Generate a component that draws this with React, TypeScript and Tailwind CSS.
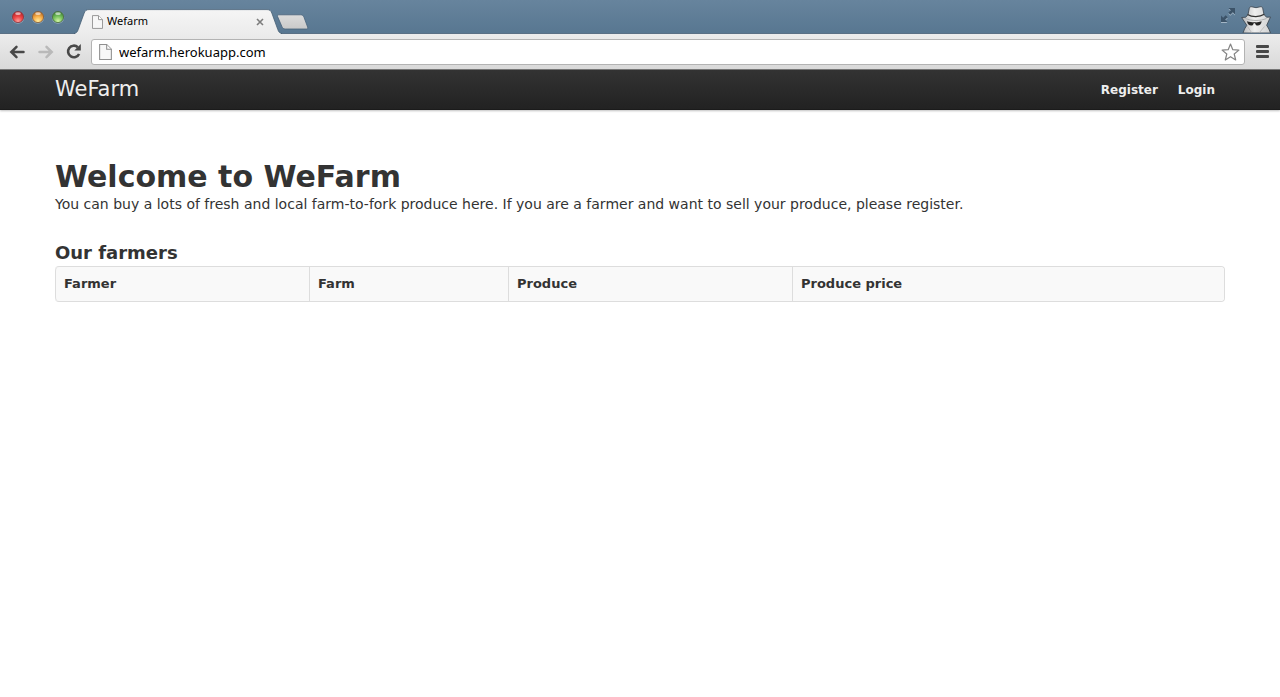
type IconProps = {
  className?: string;
};

type Column = {
  label: string;
  width: string;
};

const columns: Column[] = [
  { label: 'Farmer', width: 'w-[254px]' },
  { label: 'Farm', width: 'w-[199px]' },
  { label: 'Produce', width: 'w-[284px]' },
  { label: 'Produce price', width: 'w-auto' },
];

const PageIcon = ({ className }: IconProps) => (
  <svg viewBox="0 0 12 15" className={className} aria-hidden="true">
    <path d="M.5.5h6.6l4.4 4.4v9.6H.5z" fill="#f7f7f7" stroke="#8f8f8f" />
    <path d="M7.1.8v4.1h4.2" fill="#fff" stroke="#8f8f8f" />
  </svg>
);

const TrafficLights = () => (
  <svg
    width="54"
    height="16"
    viewBox="0 0 54 16"
    role="img"
    aria-label="Window controls"
  >
    <defs>
      <radialGradient id="red" cx=".5" cy=".85" r=".8">
        <stop offset="0" stopColor="#ff9c98" />
        <stop offset=".5" stopColor="#ee4545" />
        <stop offset="1" stopColor="#b52328" />
      </radialGradient>
      <radialGradient id="amber" cx=".5" cy=".85" r=".8">
        <stop offset="0" stopColor="#ffec9c" />
        <stop offset=".5" stopColor="#f9b14b" />
        <stop offset="1" stopColor="#b86a20" />
      </radialGradient>
      <radialGradient id="green" cx=".5" cy=".85" r=".8">
        <stop offset="0" stopColor="#d3f5a6" />
        <stop offset=".5" stopColor="#7cc560" />
        <stop offset="1" stopColor="#3c8434" />
      </radialGradient>
    </defs>
    <g fill="#a9bccb" opacity=".7">
      <circle cx="7" cy="8.6" r="6.2" />
      <circle cx="27" cy="8.6" r="6.2" />
      <circle cx="47" cy="8.6" r="6.2" />
    </g>
    <g strokeWidth=".8">
      <circle cx="7" cy="8" r="5.6" fill="url(#red)" stroke="#83343e" />
      <circle cx="27" cy="8" r="5.6" fill="url(#amber)" stroke="#7d5b3a" />
      <circle cx="47" cy="8" r="5.6" fill="url(#green)" stroke="#46693f" />
    </g>
    <g fill="#fff" opacity=".6">
      <ellipse cx="7" cy="4.7" rx="2.8" ry="1.4" />
      <ellipse cx="27" cy="4.7" rx="2.8" ry="1.4" />
      <ellipse cx="47" cy="4.7" rx="2.8" ry="1.4" />
    </g>
  </svg>
);

const IncognitoIcon = () => (
  <svg
    width="32"
    height="28"
    viewBox="0 0 32 28"
    role="img"
    aria-label="Incognito"
  >
    <defs>
      <linearGradient id="coat" x1="0" x2="1" y1="0" y2="0">
        <stop offset="0" stopColor="#b4b6b8" />
        <stop offset=".45" stopColor="#eeeeee" />
        <stop offset="1" stopColor="#cfd0d1" />
      </linearGradient>
    </defs>
    <path
      d="M8 9.500 9.300 3.200C9.600 1.900 10.800 1.500 12 1.800l4 .9 4-.9c1.300-.3 2.400.1 2.700 1.400L24 9.500l2.500 2.700 4-.2-3.800 8.300 2.200 3.700 1.600 4H3l1.500-4 2.300-3.700L1.600 12.500l4.200-.3z"
      fill="url(#coat)"
      stroke="#3f4b56"
      strokeWidth=".9"
      strokeLinejoin="round"
    />
    <path
      d="M7.500 9.500c4.500 2.800 12.200 2.800 16.800-.2"
      fill="none"
      stroke="#333"
      strokeWidth="1.300"
    />
    <path
      d="M5.500 13.500c6 2.600 15 2.600 21 0"
      fill="none"
      stroke="#a9abad"
      strokeWidth=".9"
    />
    <path
      d="M7 16.300c2.500.8 4.800 1.100 6.800 1.100-.1 2.100-1 3.100-2.700 3.100-2.100 0-3.500-1.200-4.100-4.200zM15 17.400c2.500.1 4.600-.3 6.700-1.100-.5 3-1.900 4.200-3.900 4.200-1.800 0-2.700-1-2.800-3.100z"
      fill="#242424"
    />
    <path d="M13.300 17.200h2.300v1h-2.300z" fill="#242424" />
    <path
      d="m7.500 21.500 4 6m13-6-5 6"
      stroke="#b5b5b5"
      strokeWidth=".8"
    />
  </svg>
);

const TabStrip = () => (
  <header className="flex h-[34px] items-end border-b border-[#5a7085] bg-linear-to-b from-[#67849d] to-[#587791] font-[family-name:'Noto_Sans',sans-serif]">
    <div className="self-center pl-[11px]">
      <TrafficLights />
    </div>

    <div className="relative -mb-px ml-[9px] h-[25px] w-[208px] shrink-0">
      <svg
        viewBox="0 0 208 25"
        className="absolute inset-0 size-full"
        aria-hidden="true"
      >
        <defs>
          <linearGradient id="tab" x1="0" x2="0" y1="0" y2="1">
            <stop offset="0" stopColor="#f5f5f5" />
            <stop offset="1" stopColor="#ececec" />
          </linearGradient>
        </defs>
        <path
          d="M0 24.500C2.500 24.300 3.500 22.500 4.200 20.500L10.200 4C11.300 1.500 12.500.6 15 .6h178c2.500 0 3.700.9 4.800 3.400l6 16.500c.7 2 1.700 3.800 4.200 4z"
          fill="url(#tab)"
          stroke="#465f75"
          strokeWidth=".8"
        />
        <path d="M1.500 24.500h205" stroke="#ececec" />
      </svg>
      <div className="relative flex h-full items-center pr-[17px] pl-[18px]">
        <PageIcon className="h-[14px] w-[11px]" />
        <span className="ml-1 flex-1 text-[11px] text-black">Wefarm</span>
        <button type="button" aria-label="Close tab" className="p-px">
          <svg width="8" height="8" viewBox="0 0 8 8">
            <path d="m1 1 6 6m0-6L1 7" stroke="#7d7d7d" strokeWidth="1.6" />
          </svg>
        </button>
      </div>
    </div>

    <button type="button" aria-label="New tab" className="-ml-1.5 pb-[3px]">
      <svg width="33" height="16" viewBox="0 0 33 16">
        <defs>
          <linearGradient id="new-tab" x1="0" x2="0" y1="0" y2="1">
            <stop offset="0" stopColor="#dcdcdc" />
            <stop offset="1" stopColor="#c9c9c9" />
          </linearGradient>
        </defs>
        <path
          d="M3 .8h21.500c2 0 2.800.8 3.500 2.500l3.600 9.700c.5 1.400 0 2-1.300 2H9.500c-2 0-2.900-.8-3.600-2.500L1.600 2.600C1.200 1.400 1.700.8 3 .8z"
          fill="url(#new-tab)"
          stroke="#48627a"
          strokeWidth=".8"
        />
      </svg>
    </button>

    <div className="ml-auto flex items-end gap-1 pr-2">
      <button type="button" aria-label="Full screen" className="pb-[10px]">
        <svg width="16" height="16" viewBox="0 0 16 16">
          <g fill="#a3b6c6" transform="translate(0 1)">
            <path d="M8.500 1H15v6.500l-2.200-2.200-2.500 2.500-2-2 2.500-2.500z" />
            <path d="M7.500 15H1V8.500l2.200 2.200 2.500-2.500 2 2-2.500 2.500z" />
          </g>
          <g fill="#3c5368">
            <path d="M8.500 1H15v6.500l-2.200-2.200-2.500 2.500-2-2 2.500-2.500z" />
            <path d="M7.500 15H1V8.500l2.200 2.200 2.500-2.500 2 2-2.500 2.500z" />
          </g>
        </svg>
      </button>
      <IncognitoIcon />
    </div>
  </header>
);

const Toolbar = () => (
  <div className="flex h-9 items-center border-b border-[#777777] bg-linear-to-b from-[#ececec] to-[#d9d9d9] pr-[10px] pl-[9px]">
    <button type="button" aria-label="Back">
      <svg width="17" height="16" viewBox="0 0 17 16" fill="none">
        <path
          d="M14.500 8H3.500M7.500 2.800 2.300 8l5.200 5.200"
          stroke="#484848"
          strokeWidth="2.500"
          strokeLinecap="round"
        />
      </svg>
    </button>
    <button type="button" aria-label="Forward" className="ml-3">
      <svg width="17" height="16" viewBox="0 0 17 16" fill="none">
        <path
          d="M1.500 8H13M8.500 2.800 13.700 8l-5.200 5.200"
          stroke="#b9b9b9"
          strokeWidth="2.500"
          strokeLinecap="round"
        />
      </svg>
    </button>
    <button type="button" aria-label="Reload" className="ml-[10px]">
      <svg width="17" height="17" viewBox="0 0 17 17">
        <path
          d="M12.800 4.200A5.800 5.800 0 1 0 14.100 11"
          fill="none"
          stroke="#484848"
          strokeWidth="2.600"
        />
        <path d="M15.800 1v6.500H9.300z" fill="#484848" />
      </svg>
    </button>

    <form
      className="ml-[9px] flex h-[26px] flex-1 items-center rounded-[3px] border border-[#b3b3b3] bg-white pr-1 pl-[7px]"
      onSubmit={(event) => event.preventDefault()}
    >
      <PageIcon className="h-[16px] w-[13px]" />
      <input
        type="text"
        aria-label="Address"
        defaultValue="wefarm.herokuapp.com"
        className="ml-[7px] min-w-0 flex-1 bg-transparent font-[family-name:'Noto_Sans',sans-serif] text-[13px] leading-5 text-black outline-none"
      />
      <button type="button" aria-label="Bookmark this page">
        <svg width="19" height="18" viewBox="0 0 19 18">
          <path
            d="m9.500 1 2.300 5.700 6.100.4-4.700 3.900 1.500 6-5.200-3.300L4.300 17l1.500-6L1.100 7.100l6.100-.4z"
            fill="#fff"
            stroke="#858585"
            strokeWidth="1.200"
            strokeLinejoin="round"
          />
        </svg>
      </button>
    </form>

    <button type="button" aria-label="Menu" className="ml-[10px]">
      <svg width="15" height="14" viewBox="0 0 15 14" fill="#484848">
        <rect x="1" y="0" width="13" height="3" rx="1" />
        <rect x="1" y="5" width="13" height="3" rx="1" />
        <rect x="1" y="10" width="13" height="3" rx="1" />
      </svg>
    </button>
  </div>
);

const Navbar = () => (
  <nav className="h-10 border-b border-[#1b1b1b] bg-linear-to-b from-[#333333] to-[#222222] px-5 shadow-[0_1px_2px_rgba(0,0,0,0.25)]">
    <div className="mx-auto flex h-full max-w-[1170px] items-center justify-between text-[#eeeeee]">
      <a href="#" className="text-[21px]">
        WeFarm
      </a>
      <div className="flex gap-5 pr-[10px] text-[12px] font-bold">
        <a href="#register">Register</a>
        <a href="#login">Login</a>
      </div>
    </div>
  </nav>
);

const FarmersTable = () => (
  <table
    aria-labelledby="farmers-title"
    className="w-full table-fixed border-separate border-spacing-0 rounded border border-l-0 border-[#dddddd]"
  >
    <thead>
      <tr>
        {columns.map((column) => (
          <th
            key={column.label}
            scope="col"
            className={`${column.width} border-l border-[#dddddd] bg-[#f9f9f9] p-2 text-left text-[13px] leading-[18px] font-bold first:rounded-l last:rounded-r`}
          >
            {column.label}
          </th>
        ))}
      </tr>
    </thead>
  </table>
);

const App = () => {
  return (
    <div className="min-h-screen bg-white font-[family-name:Verdana,'DejaVu_Sans',sans-serif] text-[#333333]">
      <TabStrip />
      <Toolbar />
      <Navbar />
      <main className="px-5 pt-[47px]">
        <div className="mx-auto max-w-[1170px]">
          <h1 className="text-[30px] leading-10 font-bold">
            Welcome to WeFarm
          </h1>
          <p className="text-[14px] leading-[14px]">
            You can buy a lots of fresh and local farm-to-fork produce here. If
            you are a farmer and want to sell your produce, please register.
          </p>
          <h2
            id="farmers-title"
            className="mt-7 text-[18px] leading-[27px] font-bold"
          >
            Our farmers
          </h2>
          <FarmersTable />
        </div>
      </main>
    </div>
  );
};

export default App;
